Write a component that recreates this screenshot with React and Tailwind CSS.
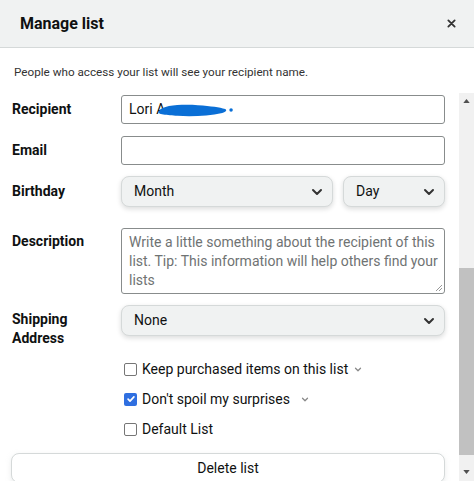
import React from 'react'

const Chevron = ({ className = '' }) => (
  <svg viewBox="0 0 12 8" className={className} fill="none" stroke="currentColor" strokeWidth="2" strokeLinecap="round" strokeLinejoin="round">
    <path d="M2 2l4 4 4-4" />
  </svg>
)

const SelectBox = ({ label, className = '' }) => (
  <div className={`flex items-center justify-between h-[31px] rounded-lg border border-[#d5d9d9] bg-[#f0f2f2] shadow-[0_2px_5px_rgba(15,17,17,0.15)] pl-[12px] pr-[9px] text-[14px] text-[#0f1111] ${className}`}>
    <span>{label}</span>
    <Chevron className="w-[12px] h-[8px] text-[#333]" />
  </div>
)

const Check = ({ checked, text, caret, caretGap = 'ml-[6px]' }) => (
  <div className="flex items-center h-[30px]">
    {checked ? (
      <span className="w-[13px] h-[13px] rounded-[2px] bg-[#2f6fe0] flex items-center justify-center">
        <svg viewBox="0 0 12 12" className="w-[10px] h-[10px]" fill="none" stroke="white" strokeWidth="2" strokeLinecap="round" strokeLinejoin="round">
          <path d="M2.5 6.2l2.3 2.3 4.7-5" />
        </svg>
      </span>
    ) : (
      <span className="w-[13px] h-[13px] rounded-[2px] border border-[#767676] bg-white" />
    )}
    <span className="ml-[5px] text-[14px] text-[#0f1111]">{text}</span>
    {caret && <Chevron className={`${caretGap} w-[8px] h-[5px] text-[#888]`} />}
  </div>
)

const Row = ({ label, children, top = false, labelPad = '', className = '' }) => (
  <div className={`flex ${top ? 'items-start' : 'items-center'} ${className}`}>
    <div className={`w-[109px] text-[14px] font-bold text-[#0f1111] leading-[19px] ${labelPad}`}>{label}</div>
    <div className="flex-1">{children}</div>
  </div>
)

export default function App() {
  return (
    <div className="w-[474px] h-[481px] overflow-hidden bg-white" style={{ fontFamily: 'Roboto, Arial, sans-serif' }}>
      <div className="h-[48px] bg-[#f0f2f2] border-b border-[#d5d9d9] flex items-center justify-between pl-[20px] pr-[18px]">
        <h1 className="text-[16px] font-bold text-[#0f1111]">Manage list</h1>
        <svg viewBox="0 0 10 10" className="w-[9px] h-[9px]" stroke="#333" strokeWidth="2" strokeLinecap="round">
          <path d="M1.5 1.5l7 7M8.5 1.5l-7 7" />
        </svg>
      </div>

      <p className="pl-[14px] pt-[16px] h-[45px] text-[11.7px] text-[#333]">
        People who access your list will see your recipient name.
      </p>

      <div className="flex h-[388px]">
        <div className="flex-1 pl-[12px] pr-[14px] pt-[2px]">
          <Row label="Recipient">
            <div className="relative h-[29px] rounded-[3px] border border-[#888c8c] flex items-center pl-[7px] text-[14px] text-[#0f1111]">
              <span>Lori A</span>
              <svg viewBox="0 0 80 16" className="absolute left-[34px] top-[6px] w-[78px] h-[16px]">
                <path d="M3 9c4-6 22-7 40-6 14 1 22 2 28 4 2 1 1 3-3 4-14 3-30 4-46 3-10-1-22-1-19-5z" fill="#0a6fd6" />
                <circle cx="77" cy="8" r="1.8" fill="#0a6fd6" />
              </svg>
            </div>
          </Row>
          <Row label="Email" className="mt-[12px]">
            <div className="h-[29px] rounded-[3px] border border-[#888c8c]" />
          </Row>
          <Row label="Birthday" className="mt-[11px]">
            <div className="flex gap-[10px]">
              <SelectBox label="Month" className="w-[212px]" />
              <SelectBox label="Day" className="flex-1" />
            </div>
          </Row>
          <Row label="Description" top labelPad="pt-[4px]" className="mt-[21px]">
            <div className="relative h-[66px] rounded-[3px] border border-[#888c8c] pl-[7px] pr-[4px] pt-[4px] text-[14px] leading-[19px] text-[#6f7373]">
              Write a little something about the recipient of this list. Tip: This information will help others find your lists
              <svg viewBox="0 0 8 8" className="absolute right-[1px] bottom-[1px] w-[8px] h-[8px]" stroke="#999" strokeWidth="1">
                <path d="M7 1L1 7M7 4L4 7" />
              </svg>
            </div>
          </Row>
          <Row label={<>Shipping<br />Address</>} top labelPad="pt-[5px]" className="mt-[11px]">
            <SelectBox label="None" />
          </Row>
          <div className="pl-[112px] mt-[6px]">
            <Check text="Keep purchased items on this list" caret />
            <Check checked text="Don't spoil my surprises" caret caretGap="ml-[11px]" />
            <Check text="Default List" />
          </div>
          <button className="mt-[9px] -ml-[1px] w-[434px] h-[30px] rounded-lg border border-[#d5d9d9] bg-white text-[14px] text-[#0f1111] shadow-[0_2px_5px_rgba(213,217,217,0.5)]">
            Delete list
          </button>
        </div>

        <div className="w-[15px] bg-[#f1f1f1] flex flex-col items-center">
          <svg viewBox="0 0 8 5" className="mt-[6px] w-[7px] h-[4px]" fill="#505050"><path d="M4 0l4 5H0z" /></svg>
          <div className="mt-[165px] w-full h-[187px] bg-[#c1c1c1]" />
          <svg viewBox="0 0 8 5" className="mt-[15px] w-[7px] h-[4px]" fill="#505050"><path d="M0 0h8L4 5z" /></svg>
        </div>
      </div>
    </div>
  )
}
